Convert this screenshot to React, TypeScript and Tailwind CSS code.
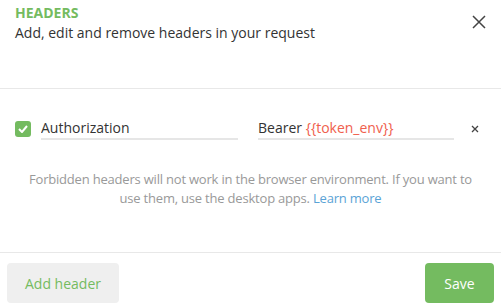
import React, { useState } from 'react'

export default function App() {
    const [checked, setChecked] = useState(true)
    const [name, setName] = useState('Authorization')

    return (
        <div className="w-[501px] h-[305px] bg-white overflow-hidden flex flex-col" style={{ fontFamily: '"Open Sans", "Noto Sans", sans-serif' }}>
            <div className="h-[88px] shrink-0 flex justify-between pl-[15px] pr-[12px] pt-[3px]">
                <div>
                    <h3 className="text-[14px] font-bold leading-[20px] text-[#74bb60]">HEADERS</h3>
                    <p className="text-[14px] leading-[20px] text-[#333]">Add, edit and remove headers in your request</p>
                </div>
                <button className="mt-[9px] h-[20px] w-[20px] flex items-center justify-center text-[#444]">
                    <svg width="14" height="14" viewBox="0 0 14 14" fill="none" stroke="currentColor" strokeWidth="1.5">
                        <path d="M1 1L13 13M13 1L1 13" />
                    </svg>
                </button>
            </div>

            <div className="border-t border-[#e8e8e8] flex-1 flex flex-col">
                <div className="flex items-center pl-[15px] pr-[22px] mt-[30px] h-[20px]">
                    <button
                        onClick={() => setChecked(!checked)}
                        className={`w-[16px] h-[16px] rounded-[3px] flex items-center justify-center ${checked ? 'bg-[#74bb60]' : 'bg-white border border-[#ccc]'}`}
                    >
                        {checked && (
                            <svg width="10" height="8" viewBox="0 0 10 8" fill="none" stroke="white" strokeWidth="2">
                                <path d="M1 4L4 7L9 1" />
                            </svg>
                        )}
                    </button>
                    <input
                        value={name}
                        onChange={(e) => setName(e.target.value)}
                        className="ml-[10px] w-[197px] h-[22px] text-[14px] text-[#333] border-b-2 border-[#e6e6e6] outline-none pb-[1px]"
                    />
                    <div className="ml-[20px] w-[196px] h-[22px] text-[14px] leading-[20px] text-[#333] border-b-2 border-[#e6e6e6] whitespace-nowrap">
                        Bearer <span className="text-[#f0604d]">{'{{token_env}}'}</span>
                    </div>
                    <button className="ml-auto text-[#444]">
                        <svg width="8" height="8" viewBox="0 0 8 8" fill="none" stroke="currentColor" strokeWidth="1.3">
                            <path d="M1 1L7 7M7 1L1 7" />
                        </svg>
                    </button>
                </div>

                <p className="mt-[31px] mx-auto w-[450px] text-center text-[13px] leading-[19px] text-[#999] tracking-[-0.2px]">
                    Forbidden headers will not work in the browser environment. If you want to use them, use the desktop apps.{' '}
                    <a href="#" className="text-[#5aa3d6]">Learn more</a>
                </p>
            </div>

            <div className="h-[53px] shrink-0 border-t border-[#e8e8e8] flex justify-between items-start pt-[10px] pl-[7px] pr-[7px]">
                <button className="w-[112px] h-[40px] rounded-[4px] bg-[#efefef] text-[14px] text-[#74bb60]">Add header</button>
                <button className="w-[69px] h-[40px] rounded-[4px] bg-[#74bb60] text-[14px] text-white">Save</button>
            </div>
        </div>
    )
}
